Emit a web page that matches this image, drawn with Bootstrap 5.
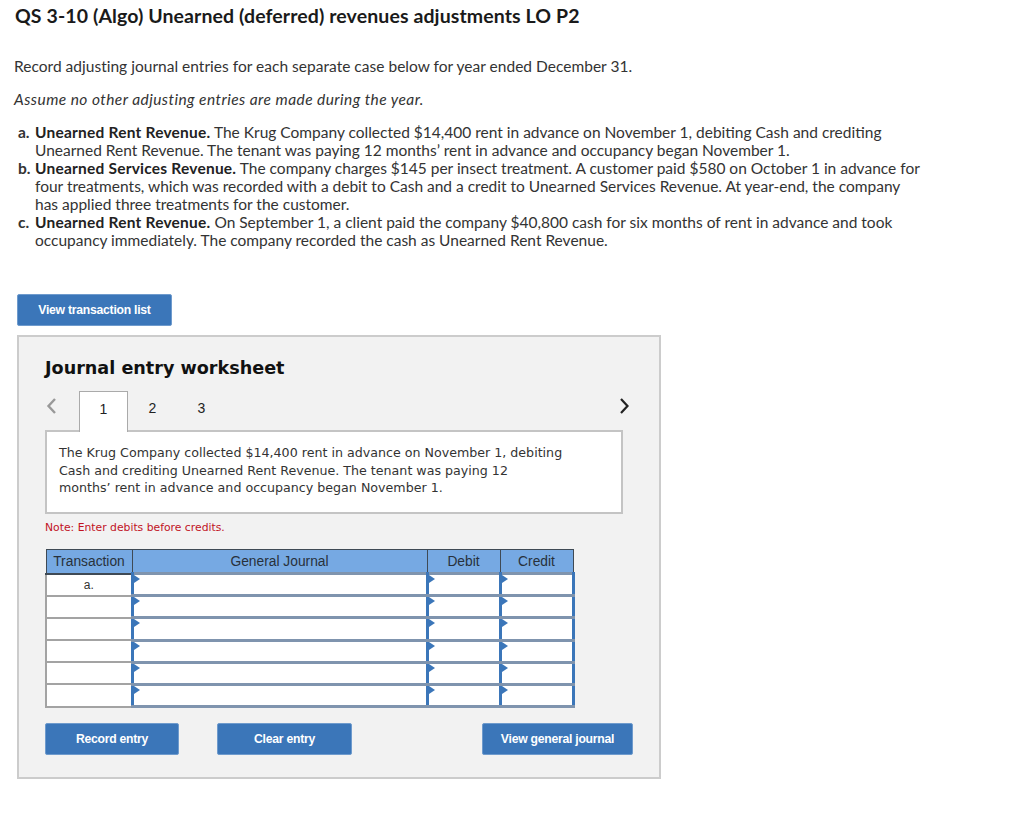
<!DOCTYPE html>
<html lang="en">
<head>
<meta charset="utf-8">
<title>QS 3-10</title>
<link href="https://cdn.jsdelivr.net/npm/bootstrap@5.3.0/dist/css/bootstrap.min.css" rel="stylesheet">
<style>
body{background:#fff;font-family:"Lato","Liberation Sans",sans-serif;color:#333;font-size:15.5px;line-height:18px;}
.page-wrap{width:1017px;height:816px;overflow:hidden;padding:7px 0 0 15px;}
.qs-title{font-family:"Lato",sans-serif;font-weight:700;font-size:19.5px;letter-spacing:.1px;line-height:18px;color:#1a1a1a;margin:0 0 32px;}
.intro{margin:0 0 15px -1px;letter-spacing:.02px;}
.intro-i{margin:0 0 15px -1px;font-style:italic;letter-spacing:.44px;}
.case-list{margin:0 0 45px;padding:0 0 0 3px;width:906px;list-style:none;}
.case-list .mk{flex:0 0 17px;font-weight:700;}
.case-list b{font-weight:700;color:#222;letter-spacing:.22px;}
.blue-btn{background:#3b76b9;border:1px solid #6f9bcd;border-radius:2px;color:#fff;font-family:"Liberation Sans",sans-serif;font-weight:700;font-size:12.2px;letter-spacing:-.25px;height:32px;padding:0;}
.blue-btn:hover{background:#3b76b9;color:#fff;}
.list-btn{width:155px;margin:0 0 9px 2px;display:block;}
.sheet{width:644px;height:444px;margin-left:2px;background:#f2f2f2;border:2px solid #ccc;padding:21px 26px 0;position:relative;}
.sheet h2{font-family:"DejaVu Sans",sans-serif;font-weight:700;font-size:17.6px;line-height:20px;color:#111;margin:0 0 13px;}
.tab-row{height:40px;position:relative;}
.tab-item{width:49px;height:40px;text-align:center;font-family:"Liberation Sans",sans-serif;font-size:14px;line-height:34px;color:#222;}
.tab-on{background:#fff;border:1px solid #aaa;border-bottom:0;position:relative;z-index:2;height:41px;}
.tab-gap{width:34px;}
.arrow-l{margin-top:6px;}
.arrow-r{position:absolute;right:1px;top:6px;}
.case-box{width:578px;height:84px;margin-top:-1px;background:#fff;border:2px solid #c4c4c4;padding:12px;font-family:"DejaVu Sans",sans-serif;font-size:12.65px;line-height:17.5px;color:#333;}
.note{font-family:"DejaVu Sans",sans-serif;font-size:10.8px;line-height:14px;color:#c1121f;margin:7px 0 14px;}
.journal{table-layout:fixed;border-collapse:collapse;width:527px;font-family:"Liberation Sans",sans-serif;}
.journal th{background:#76a9e3;border:1px solid #3f4a55;border-bottom:2px solid #3f4a55;height:24px;font-weight:400;font-size:13.8px;text-align:center;color:#28313b;padding:1px 0 0;}
.journal td{background:#fff;height:22.2px;padding:0;border:3px solid #7f94ae;border-left:3px solid #3b76b9;border-right:3px solid #3b76b9;position:relative;font-size:12px;line-height:14px;vertical-align:top;text-align:center;}
.journal td.t-cell{border:2px solid #a3a3a3;border-right:2px solid #666;padding-top:3px;color:#333;}
.journal td:not(.t-cell)::before{content:"";position:absolute;left:0;top:0;border-left:6px solid #3b76b9;border-top:4px solid transparent;border-bottom:4px solid transparent;}
.action-row{width:588px;margin-top:15px;}
.btn-rec{width:134px;}
.btn-clr{width:135px;margin-left:38px;}
.btn-gj{width:151px;margin-left:auto;}
</style>
</head>
<body>
<div class="page-wrap">
<h1 class="qs-title">QS 3-10 (Algo) Unearned (deferred) revenues adjustments LO P2</h1>
<p class="intro">Record adjusting journal entries for each separate case below for year ended December 31.</p>
<p class="intro-i">Assume no other adjusting entries are made during the year.</p>
<ol class="case-list">
<li class="d-flex"><span class="mk">a.</span><span><b>Unearned Rent Revenue.</b> The Krug Company collected $14,400 rent in advance on November 1, debiting Cash and crediting Unearned Rent Revenue. The tenant was paying 12 months’ rent in advance and occupancy began November 1.</span></li>
<li class="d-flex"><span class="mk">b.</span><span><b>Unearned Services Revenue.</b> The company charges $145 per insect treatment. A customer paid $580 on October 1 in advance for four treatments, which was recorded with a debit to Cash and a credit to Unearned Services Revenue. At year-end, the company has applied three treatments for the customer.</span></li>
<li class="d-flex"><span class="mk">c.</span><span><b>Unearned Rent Revenue.</b> On September 1, a client paid the company $40,800 cash for six months of rent in advance and took occupancy immediately. The company recorded the cash as Unearned Rent Revenue.</span></li>
</ol>
<button type="button" class="btn blue-btn list-btn">View transaction list</button>
<section class="sheet">
<h2>Journal entry worksheet</h2>
<div class="tab-row d-flex">
<div class="tab-gap"><svg class="arrow-l" width="14" height="18" viewBox="0 0 14 18"><path d="M10 2 L3.5 9 L10 16" fill="none" stroke="#999" stroke-width="2.4"/></svg></div>
<div class="tab-item tab-on">1</div>
<div class="tab-item">2</div>
<div class="tab-item">3</div>
<svg class="arrow-r" width="14" height="18" viewBox="0 0 14 18"><path d="M3 2 L9.5 9 L3 16" fill="none" stroke="#222" stroke-width="2.2"/></svg>
</div>
<div class="case-box">The Krug Company collected $14,400 rent in advance on November 1, debiting<br>Cash and crediting Unearned Rent Revenue. The tenant was paying 12<br>months’ rent in advance and occupancy began November 1.</div>
<p class="note">Note: Enter debits before credits.</p>
<table class="journal">
<colgroup><col style="width:86px"><col style="width:295px"><col style="width:73px"><col style="width:73px"></colgroup>
<thead><tr><th>Transaction</th><th>General Journal</th><th>Debit</th><th>Credit</th></tr></thead>
<tbody>
<tr><td class="t-cell">a.</td><td></td><td></td><td></td></tr>
<tr><td class="t-cell"></td><td></td><td></td><td></td></tr>
<tr><td class="t-cell"></td><td></td><td></td><td></td></tr>
<tr><td class="t-cell"></td><td></td><td></td><td></td></tr>
<tr><td class="t-cell"></td><td></td><td></td><td></td></tr>
<tr><td class="t-cell"></td><td></td><td></td><td></td></tr>
</tbody>
</table>
<div class="action-row d-flex">
<button type="button" class="btn blue-btn btn-rec">Record entry</button>
<button type="button" class="btn blue-btn btn-clr">Clear entry</button>
<button type="button" class="btn blue-btn btn-gj">View general journal</button>
</div>
</section>
</div>
</body>
</html>
